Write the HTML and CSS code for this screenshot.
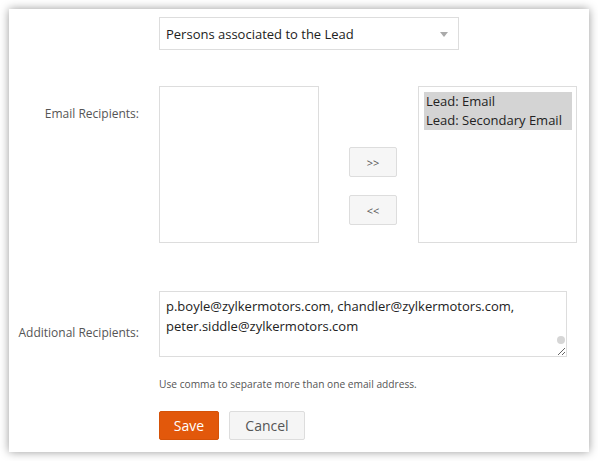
FILE: index.html
```html
<!DOCTYPE html>
<html>
<head>
  <title>Email Recipients</title>
  <link rel="stylesheet" href="styles.css">
</head>
<body>
  <div class="panel">
    <div class="row row-select">
      <div class="label"></div>
      <div class="field">
        <div class="select">
          <span>Persons associated to the Lead</span>
          <span class="caret"></span>
        </div>
      </div>
    </div>

    <div class="row row-lists">
      <div class="label">Email Recipients:</div>
      <div class="field transfer">
        <div class="listbox"></div>
        <div class="moves">
          <button class="move">&gt;&gt;</button>
          <button class="move">&lt;&lt;</button>
        </div>
        <div class="listbox listbox-right">
          <div class="option selected">Lead: Email</div>
          <div class="option selected">Lead: Secondary Email</div>
        </div>
      </div>
    </div>

    <div class="row row-extra">
      <div class="label label-extra">Additional Recipients:</div>
      <div class="field">
        <div class="textarea-wrap">
          <textarea>p.boyle@zylkermotors.com, chandler@zylkermotors.com, peter.siddle@zylkermotors.com</textarea>
          <span class="scroll-dot"></span>
        </div>
        <p class="hint">Use comma to separate more than one email address.</p>
        <div class="actions">
          <button class="btn btn-save">Save</button>
          <button class="btn btn-cancel">Cancel</button>
        </div>
      </div>
    </div>
  </div>
</body>
</html>
```

FILE: styles.css
```css
body {
  margin: 0;
  padding: 9px;
  background: #fff;
  font-family: "Open Sans", sans-serif;
  color: #333;
}
.panel {
  width: 580px;
  height: 443px;
  box-sizing: border-box;
  padding-top: 8px;
  background: #fff;
  box-shadow: 0 0 9px rgba(0, 0, 0, 0.4);
}
.row {
  display: flex;
}
.label {
  width: 130px;
  margin-right: 20px;
  text-align: right;
  font-size: 12px;
  color: #555;
}
.field {
  flex: 1;
}
.select {
  width: 300px;
  height: 33px;
  box-sizing: border-box;
  border: 1px solid #ddd;
  padding: 0 6px;
  display: flex;
  align-items: center;
  justify-content: space-between;
  font-size: 13px;
  color: #222;
}
.caret {
  width: 0;
  height: 0;
  margin-right: 4px;
  margin-top: 2px;
  border-left: 4px solid transparent;
  border-right: 4px solid transparent;
  border-top: 5px solid #aaa;
}
.row-lists {
  margin-top: 36px;
}
.row-lists .label {
  padding-top: 19px;
}
.transfer {
  display: flex;
}
.listbox {
  width: 160px;
  height: 157px;
  box-sizing: border-box;
  border: 1px solid #ddd;
  padding: 5px 4px 5px 5px;
  font-size: 13px;
  color: #222;
}
.listbox-right {
  width: 159px;
}
.option {
  height: 19px;
  line-height: 19px;
  padding-left: 2px;
}
.option.selected {
  background: #d4d4d4;
}
.moves {
  display: flex;
  flex-direction: column;
  gap: 18px;
  padding-top: 61px;
  margin: 0 21px 0 30px;
}
.move {
  width: 48px;
  height: 30px;
  border: 1px solid #ddd;
  border-radius: 2px;
  background: #f6f6f6;
  font-family: "Open Sans", sans-serif;
  font-size: 11px;
  color: #555;
  padding: 0;
}
.row-extra {
  margin-top: 48px;
}
.label-extra {
  padding-top: 33px;
}
.textarea-wrap {
  position: relative;
  width: 408px;
}
textarea {
  display: block;
  width: 408px;
  height: 66px;
  box-sizing: border-box;
  border: 1px solid #ddd;
  padding: 4px 6px;
  margin: 0;
  font-family: "Open Sans", sans-serif;
  font-size: 13px;
  line-height: 20px;
  color: #222;
  outline: none;
}
.scroll-dot {
  position: absolute;
  right: 2px;
  top: 45px;
  width: 8px;
  height: 8px;
  border-radius: 50%;
  background: #d6d6d6;
}
.hint {
  margin: 20px 0 0;
  font-size: 10.2px;
  line-height: 15px;
  color: #555;
}
.actions {
  display: flex;
  gap: 10px;
  margin-top: 19px;
}
.btn {
  height: 29px;
  border-radius: 2px;
  font-family: "Open Sans", sans-serif;
  font-size: 14px;
  padding: 0;
}
.btn-save {
  width: 60px;
  border: 1px solid #d55208;
  background: #e2580b;
  color: #fff;
}
.btn-cancel {
  width: 76px;
  border: 1px solid #ddd;
  background: #f5f5f5;
  color: #555;
}
```
